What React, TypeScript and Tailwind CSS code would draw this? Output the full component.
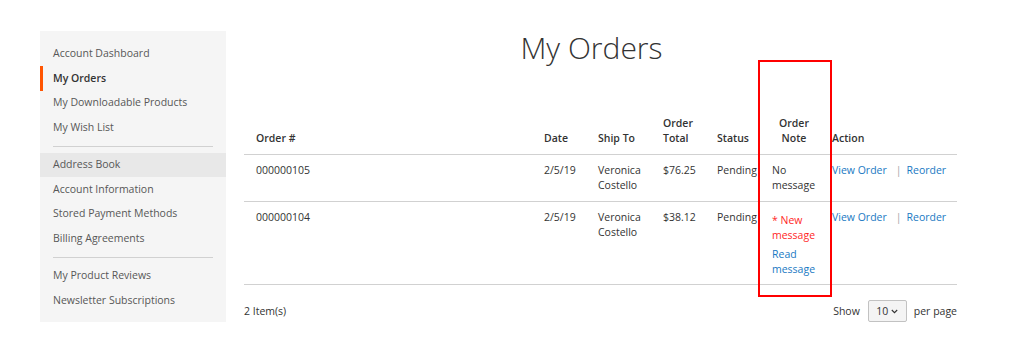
import React from "react";

const navGroups = [
  ["Account Dashboard", "My Orders", "My Downloadable Products", "My Wish List"],
  ["Address Book", "Account Information", "Stored Payment Methods", "Billing Agreements"],
  ["My Product Reviews", "Newsletter Subscriptions"],
];

type Order = {
  id: string;
  date: string;
  shipTo: string;
  total: string;
  status: string;
  isNew: boolean;
};

const orders: Order[] = [
  { id: "000000105", date: "2/5/19", shipTo: "Veronica Costello", total: "$76.25", status: "Pending", isNew: false },
  { id: "000000104", date: "2/5/19", shipTo: "Veronica Costello", total: "$38.12", status: "Pending", isNew: true },
];

function Sidebar() {
  return (
    <nav className="mt-px w-[186px] shrink-0 bg-[#f5f5f5] pt-[10.5px] pb-[9.5px]">
      {navGroups.map((group, gi) => (
        <div key={gi}>
          {gi > 0 && <div className="mx-[13px] my-[6px] h-px bg-[#d1d1d1]" />}
          {group.map((item) => {
            const active = item === "My Orders";
            const hovered = item === "Address Book";
            return (
              <div
                key={item}
                className={
                  "relative py-[4.75px] pl-[13px] leading-[15px] " +
                  (active ? "font-semibold text-[#333]" : "text-[#575757]") +
                  (hovered ? " bg-[#e8e8e8]" : "")
                }
              >
                {active && <span className="absolute left-0 top-0 bottom-0 w-[3px] bg-[#ff5501]" />}
                {item}
              </div>
            );
          })}
        </div>
      ))}
    </nav>
  );
}

function OrdersTable() {
  return (
    <table className="mt-[50px] w-[713px] table-fixed border-collapse text-left">
      <colgroup>
        <col className="w-[288px]" />
        <col className="w-[54px]" />
        <col className="w-[65px]" />
        <col className="w-[54px]" />
        <col className="w-[55px]" />
        <col className="w-[72px]" />
        <col className="w-[125px]" />
      </colgroup>
      <thead>
        <tr className="border-b border-[#d1d1d1] align-bottom font-semibold text-[#333]">
          <th className="pl-3 pt-2 pb-[8px] font-semibold">Order #</th>
          <th className="pl-3 pb-[8px] font-semibold">Date</th>
          <th className="whitespace-nowrap pl-3 pb-[8px] font-semibold">Ship To</th>
          <th className="pl-3 pb-[8px] font-semibold">
            Order
            <br />
            Total
          </th>
          <th className="pl-3 pb-[8px] font-semibold">Status</th>
          <th className="pl-3 pr-[16px] pb-[8px] text-center font-semibold">
            Order
            <br />
            Note
          </th>
          <th className="pb-[8px] font-semibold">Action</th>
        </tr>
      </thead>
      <tbody className="text-[#333]">
        {orders.map((o) => (
          <tr key={o.id} className="border-b border-[#d1d1d1] align-top">
            <td className="pl-3 pt-[8px] pb-[7.5px]">{o.id}</td>
            <td className="whitespace-nowrap pl-3 pt-[8px]">{o.date}</td>
            <td className="pl-3 pt-[8px]">{o.shipTo}</td>
            <td className="pl-3 pt-[8px]">{o.total}</td>
            <td className="whitespace-nowrap pl-3 pt-[8px]">{o.status}</td>
            <td className="px-3 pt-[8px] pb-[7.5px]">
              {o.isNew ? (
                <>
                  <div className="mt-[3px] text-[#ff1f1f]">* New message</div>
                  <a className="mt-[4px] block text-[#1979c3]" href="#">
                    Read message
                  </a>
                </>
              ) : (
                "No message"
              )}
            </td>
            <td className="whitespace-nowrap pt-[8px]">
              <a className="text-[#1979c3]" href="#">View Order</a>
              <span className="ml-[9px] mr-[5px] text-[#a6a6a6]">|</span>
              <a className="text-[#1979c3]" href="#">Reorder</a>
            </td>
          </tr>
        ))}
      </tbody>
    </table>
  );
}

export default function App() {
  return (
    <div
      className="relative flex h-[363px] w-[1024px] bg-white pt-[30px] pl-[40px] text-[10.5px] leading-[15px] text-[#333]"
      style={{ fontFamily: '"Open Sans", "Noto Sans", sans-serif' }}
    >
      <div className="self-start">
        <Sidebar />
      </div>
      <main className="w-[731px]">
        <h1 className="text-center text-[30px] font-light leading-[36px] text-[#333]">My Orders</h1>
        <div className="pl-[18px]">
          <OrdersTable />
          <div className="mt-[15px] flex items-center justify-between">
            <span>2 Item(s)</span>
            <div className="flex items-center">
              <span>Show</span>
              <div className="ml-[8px] mr-[7px] flex h-[22px] w-[39px] items-center justify-center gap-[3px] rounded-[2px] border border-[#c2c2c2] bg-[#f4f4f4]">
                <span>10</span>
                <svg width="7" height="5" viewBox="0 0 7 5" fill="none">
                  <path d="M0.8 1 L3.5 3.7 L6.2 1" stroke="#333" strokeWidth="1.1" />
                </svg>
              </div>
              <span>per page</span>
            </div>
          </div>
        </div>
      </main>
      <div className="pointer-events-none absolute left-[758px] top-[60px] h-[237px] w-[74px] border-2 border-[#ff0000]" />
    </div>
  );
}
